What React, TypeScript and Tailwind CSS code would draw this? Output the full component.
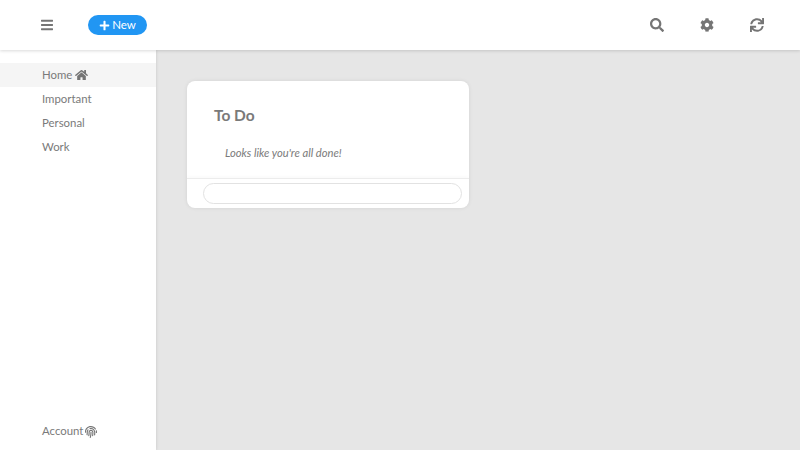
import type { ReactElement, ReactNode } from 'react';
import { FaBars, FaCog, FaFingerprint, FaHome, FaPlus, FaSearch, FaSync } from 'react-icons/fa';

function NavRow({ active, children }: { active?: boolean; children: ReactNode }): ReactElement {
  return (
    <div className={`flex h-[24.2px] items-center gap-[2px] pb-[2px] pl-[42px] text-[11.4px] ${active ? 'bg-[#f5f5f5]' : ''}`}>
      {children}
    </div>
  );
}

export default function App(): ReactElement {
  return (
    <div className="flex h-[450px] w-[800px] flex-col overflow-hidden bg-[#e6e6e6] font-['Lato',sans-serif] text-[#7a7a7a]">
      <header className="relative z-20 flex h-[50px] shrink-0 items-center bg-white pl-[41px] pr-[36px] shadow-[0_1px_3px_rgba(0,0,0,0.15)]">
        <FaBars className="h-[14px] w-[12px] text-[#757575]" />
        <button className="ml-[35px] flex h-[20px] w-[59px] items-center justify-center gap-[2px] rounded-full bg-[#2196f3] text-[11.5px] text-white">
          <FaPlus className="h-[11px] w-[11px]" />
          New
        </button>
        <div className="ml-auto flex items-center gap-[36px] text-[#757575]">
          <FaSearch className="h-[14px] w-[14px]" />
          <FaCog className="h-[14px] w-[14px]" />
          <FaSync className="h-[14px] w-[14px]" />
        </div>
      </header>
      <div className="flex min-h-0 flex-1">
        <aside className="relative z-10 flex w-[156px] shrink-0 flex-col bg-white pb-[6px] pt-[13px] shadow-[0_0_3px_rgba(0,0,0,0.15)]">
          <NavRow active>
            Home <FaHome className="ml-[1px] mt-[2px] h-[12px] w-[13px] text-[#757575]" />
          </NavRow>
          <NavRow>Important</NavRow>
          <NavRow>Personal</NavRow>
          <NavRow>Work</NavRow>
          <div className="mt-auto">
            <NavRow>
              Account <FaFingerprint className="mt-[2px] h-[12px] w-[12px] text-[#757575]" />
            </NavRow>
          </div>
        </aside>
        <main className="flex-1 pl-[31px] pt-[31px]">
          <section className="flex h-[127px] w-[282px] flex-col rounded-[8px] bg-white shadow-[0_0_4px_rgba(0,0,0,0.08)]">
            <h2 className="pl-[27px] pt-[23px] text-[15.5px] font-bold leading-[22px]">To Do</h2>
            <p className="pl-[38px] pt-[20px] text-[11.2px] italic leading-[14px]">Looks like you're all done!</p>
            <div className="mt-auto flex h-[30px] items-center border-t border-[#ececec] pl-[16px] pr-[7px] shadow-[0_-2px_3px_rgba(0,0,0,0.02)]">
              <input className="h-[21px] w-full rounded-full border border-[#e2e2e2] bg-white outline-none" />
            </div>
          </section>
        </main>
      </div>
    </div>
  );
}
